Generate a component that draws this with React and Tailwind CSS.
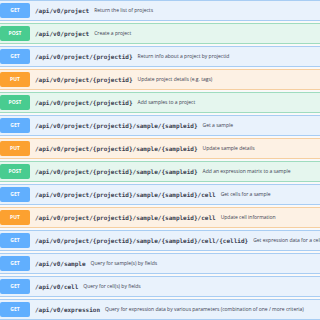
const METHOD = {
  GET: { badge: 'bg-[#61affe]', row: 'bg-[#e9f2fc] border-[#a8cdf3]' },
  POST: { badge: 'bg-[#49cc90]', row: 'bg-[#e5f6ee] border-[#9fdcbf]' },
  PUT: { badge: 'bg-[#fca130]', row: 'bg-[#fdf1e4] border-[#f6cfa0]' },
};

const P = '/api/v0/project/{projectid}';
const S = P + '/sample/{sampleid}';

const ops = [
  ['GET', '/api/v0/project', 'Return the list of projects'],
  ['POST', '/api/v0/project', 'Create a project'],
  ['GET', P, 'Return info about a project by projectid'],
  ['PUT', P, 'Update project details (e.g. tags)'],
  ['POST', P, 'Add samples to a project'],
  ['GET', S, 'Get a sample'],
  ['PUT', S, 'Update sample details'],
  ['POST', S, 'Add an expression matrix to a sample'],
  ['GET', S + '/cell', 'Get cells for a sample'],
  ['PUT', S + '/cell', 'Update cell information'],
  ['GET', S + '/cell/{cellid}', 'Get expression data for a cell'],
  ['GET', '/api/v0/sample', 'Query for sample(s) by fields'],
  ['GET', '/api/v0/cell', 'Query for cell(s) by fields'],
  ['GET', '/api/v0/expression', 'Query for expression data by various parameters (combination of one / more criteria)'],
];

export default function App() {
  return (
    <div className="w-[320px] h-[320px] overflow-hidden bg-white">
      <div className="flex flex-col gap-[2px] -ml-[3px] w-[340px]">
        {ops.map(([m, path, desc], i) => (
          <div
            key={i}
            className={`flex items-center gap-[5px] h-[21px] border rounded-[2px] p-[2px] whitespace-nowrap shadow-[0_0_1px_rgba(0,0,0,0.25)] ${METHOD[m].row}`}
          >
            <span
              className={`w-[30px] h-[15px] shrink-0 rounded-[2px] flex items-center justify-center text-white font-bold text-[5px] font-['Open_Sans',sans-serif] ${METHOD[m].badge}`}
            >
              {m}
            </span>
            <span className="text-[6px] font-bold text-[#3b4151] font-['DejaVu_Sans_Mono',monospace]">{path}</span>
            <span className="text-[5px] text-[#3b4151] font-['Open_Sans',sans-serif]">{desc}</span>
          </div>
        ))}
      </div>
    </div>
  );
}
